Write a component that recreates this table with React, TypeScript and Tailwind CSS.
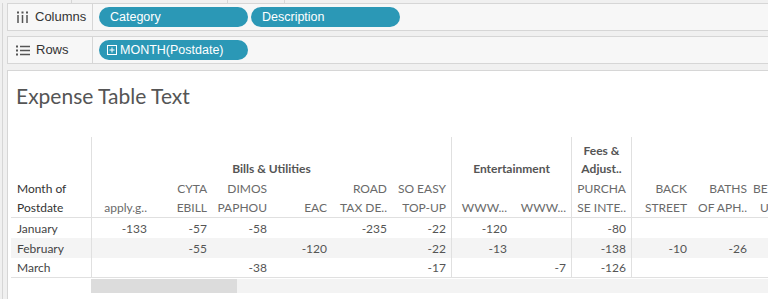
import React from 'react';

type Col = { top?: string; bottom: string; end?: boolean; cut?: boolean };

const cols: Col[] = [
  { bottom: 'apply.g..' },
  { top: 'CYTA', bottom: 'EBILL' },
  { top: 'DIMOS', bottom: 'PAPHOU' },
  { bottom: 'EAC' },
  { top: 'ROAD', bottom: 'TAX DE..' },
  { top: 'SO EASY', bottom: 'TOP-UP', end: true },
  { bottom: 'WWW...' },
  { bottom: 'WWW...', end: true },
  { top: 'PURCHA', bottom: 'SE INTE..', end: true },
  { top: 'BACK', bottom: 'STREET' },
  { top: 'BATHS', bottom: 'OF APH..' },
  { top: 'BE', bottom: 'U', cut: true },
];

const rows: { label: string; values: (string | null)[] }[] = [
  { label: 'January', values: ['-133', '-57', '-58', null, '-235', '-22', '-120', null, '-80', null, null, null] },
  { label: 'February', values: [null, '-55', null, '-120', null, '-22', '-13', null, '-138', '-10', '-26', null] },
  { label: 'March', values: [null, null, '-38', null, null, '-17', null, '-7', '-126', null, null, null] },
];

function ColumnsIcon() {
  return (
    <svg width="13" height="12" viewBox="0 0 13 12" className="shrink-0">
      <rect x="1" y="0.5" width="2" height="2" fill="#555" />
      <rect x="5.5" y="0.5" width="2" height="2" fill="#555" />
      <rect x="10" y="0.5" width="2" height="2" fill="#555" />
      <rect x="1.25" y="4" width="1.5" height="8" fill="#555" />
      <rect x="5.75" y="4" width="1.5" height="8" fill="#555" />
      <rect x="10.25" y="4" width="1.5" height="8" fill="#555" />
    </svg>
  );
}

function RowsIcon() {
  return (
    <svg width="14" height="11" viewBox="0 0 14 11" className="shrink-0">
      {[0.5, 4.5, 8.5].map((y) => (
        <g key={y}>
          <rect x="0" y={y} width="2" height="2" fill="#555" />
          <rect x="4" y={y + 0.25} width="10" height="1.5" fill="#555" />
        </g>
      ))}
    </svg>
  );
}

function PlusBox() {
  return (
    <svg width="10" height="10" viewBox="0 0 10 10" className="shrink-0">
      <rect x="0.5" y="0.5" width="9" height="9" fill="none" stroke="#fff" strokeWidth="1" />
      <path d="M5 2.5v5M2.5 5h5" stroke="#fff" strokeWidth="1" />
    </svg>
  );
}

function Pill({ children }: { children: React.ReactNode }) {
  return (
    <div className="h-[20px] w-[149px] shrink-0 rounded-full bg-[#2b98b6] text-white text-[12.5px] flex items-center gap-[3px] pl-[8px]">
      {children}
    </div>
  );
}

function Shelf({ icon, label, children }: { icon: React.ReactNode; label: string; children: React.ReactNode }) {
  return (
    <div className="ml-[4px] h-[28px] flex bg-[#f7f7f7] border border-r-0 border-[#d6d6d6]">
      <div className="w-[85px] shrink-0 border-r border-[#d6d6d6] flex items-center gap-[6px] pl-[8px] text-[13px] text-[#333]">
        {icon}
        <span>{label}</span>
      </div>
      <div className="flex items-center gap-[3px] pl-[6px]">{children}</div>
    </div>
  );
}

export default function App() {
  return (
    <div
      className="w-[768px] h-[299px] overflow-hidden bg-[#f0f0f0] flex flex-col"
      style={{ fontFamily: '"Liberation Sans", Arial, sans-serif' }}
    >
      <div className="h-[3px] flex shrink-0">
        <div className="w-[72px] border-r border-[#d6d6d6]" />
        <div className="w-[156px] border-r border-[#d6d6d6]" />
        <div className="w-[57px] border-r border-[#d6d6d6]" />
      </div>

      <div className="flex flex-col gap-[5px] border-l border-[#d6d6d6] ml-[2px]">
        <Shelf icon={<ColumnsIcon />} label="Columns">
          <Pill>
            <span className="pl-[3px]">Category</span>
          </Pill>
          <Pill>
            <span className="pl-[3px]">Description</span>
          </Pill>
        </Shelf>
        <Shelf icon={<RowsIcon />} label="Rows">
          <Pill>
            <PlusBox />
            <span>MONTH(Postdate)</span>
          </Pill>
        </Shelf>
      </div>

      <div className="flex-1 flex border-l border-[#d6d6d6] ml-[2px] pt-[6px]">
        <div
          className="flex-1 ml-[4px] bg-white border-l border-t border-[#d6d6d6] overflow-hidden flex flex-col"
          style={{ fontFamily: 'Lato, "Open Sans", sans-serif' }}
        >
          <div className="h-[66px] shrink-0 pl-[8px] pt-[9px] text-[21px] text-[#555]">Expense Table Text</div>

          <div className="ml-[3px] w-[820px]">
            <div className="grid grid-cols-[81px_repeat(12,60px)] text-[12px] leading-[19px]">
              {/* category header */}
              <div className="h-[43px] border-r border-[#e0e0e0]" />
              <div className="col-span-6 h-[43px] border-r border-[#e0e0e0] flex items-end justify-center pb-[2px] font-bold text-[#555]">
                Bills &amp; Utilities
              </div>
              <div className="col-span-2 h-[43px] border-r border-[#e0e0e0] flex items-end justify-center pb-[2px] font-bold text-[#555]">
                Entertainment
              </div>
              <div className="h-[43px] border-r border-[#e0e0e0] flex flex-col justify-end items-center pb-[2px] font-bold text-[#555] leading-[18px]">
                <span>Fees &amp;</span>
                <span>Adjust..</span>
              </div>
              <div className="col-span-3 h-[43px]" />

              {/* column header */}
              <div className="h-[38px] border-r border-b border-[#e0e0e0] pl-[6px] text-[#333] flex flex-col justify-end">
                <span>Month of</span>
                <span>Postdate</span>
              </div>
              {cols.map((c, i) => (
                <div
                  key={i}
                  className={
                    'h-[38px] border-b border-[#e0e0e0] text-[#6a6a6a] flex flex-col justify-end whitespace-nowrap ' +
                    (c.cut ? 'text-left pl-[1px] ' : 'text-right pr-[5px] ') +
                    (c.end ? 'border-r' : '')
                  }
                >
                  {c.top && <span>{c.top}</span>}
                  <span className={c.cut ? 'pl-[7px]' : ''}>{c.bottom}</span>
                </div>
              ))}

              {/* data */}
              {rows.map((r, ri) => (
                <React.Fragment key={r.label}>
                  <div
                    className={
                      'h-[20px] border-r border-[#e0e0e0] pl-[6px] text-[#444] flex items-center ' +
                      (ri === 1 ? 'bg-[#f4f4f4] ' : '') +
                      (ri === 2 ? 'border-b' : '')
                    }
                  >
                    {r.label}
                  </div>
                  {r.values.map((v, ci) => (
                    <div
                      key={ci}
                      className={
                        'h-[20px] border-[#e0e0e0] pr-[5px] text-[#555] flex items-center justify-end ' +
                        (ri === 1 ? 'bg-[#f4f4f4] ' : '') +
                        (cols[ci].end ? 'border-r ' : '') +
                        (ri === 2 ? 'border-b' : '')
                      }
                    >
                      {v}
                    </div>
                  ))}
                </React.Fragment>
              ))}
            </div>

            <div className="flex h-[14px] mt-[1px] ml-[80px] bg-[#f3f3f3]">
              <div className="w-[146px] bg-[#dcdcdc]" />
            </div>
          </div>
        </div>
      </div>
    </div>
  );
}
